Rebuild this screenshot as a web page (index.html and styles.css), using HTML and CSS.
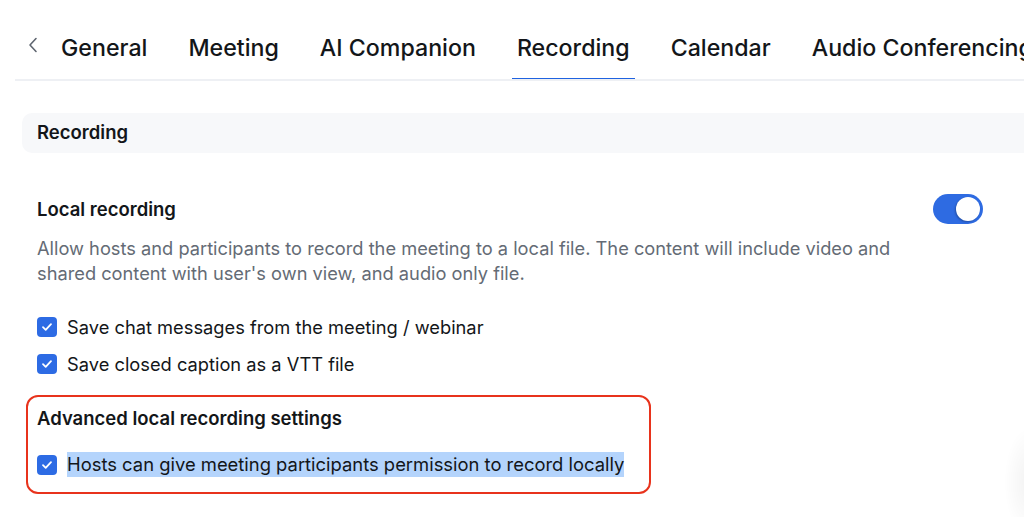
FILE: index.html
```html
<!DOCTYPE html>
<html>
<head>
    <title>Settings - Recording</title>
    <link rel="stylesheet" href="styles.css">
</head>
<body>
    <div class="tabs">
        <span class="tab-back">
            <svg width="12" height="16" viewBox="0 0 12 16"><path d="M9 1.5 L3 8 L9 14.5" fill="none" stroke="#5f6670" stroke-width="1.6" stroke-linecap="round" stroke-linejoin="round"/></svg>
        </span>
        <span class="tab">General</span>
        <span class="tab">Meeting</span>
        <span class="tab">AI Companion</span>
        <span class="tab active">Recording</span>
        <span class="tab">Calendar</span>
        <span class="tab">Audio Conferencing</span>
    </div>

    <div class="section-head">Recording</div>

    <div class="setting">
        <div class="setting-row">
            <div class="setting-title">Local recording</div>
            <div class="toggle on"><span class="knob"></span></div>
        </div>
        <p class="setting-desc">Allow hosts and participants to record the meeting to a local file. The content will include video and shared content with user's own view, and audio only file.</p>

        <label class="check-row"><span class="checkbox"><svg width="12" height="10" viewBox="0 0 12 10"><path d="M2 5.2 L4.7 7.8 L10 2.2" fill="none" stroke="#fff" stroke-width="1.8" stroke-linecap="round" stroke-linejoin="round"/></svg></span>Save chat messages from the meeting / webinar</label>
        <label class="check-row"><span class="checkbox"><svg width="12" height="10" viewBox="0 0 12 10"><path d="M2 5.2 L4.7 7.8 L10 2.2" fill="none" stroke="#fff" stroke-width="1.8" stroke-linecap="round" stroke-linejoin="round"/></svg></span>Save closed caption as a VTT file</label>

        <div class="advanced">
            <div class="advanced-title">Advanced local recording settings</div>
            <label class="check-row short"><span class="checkbox"><svg width="12" height="10" viewBox="0 0 12 10"><path d="M2 5.2 L4.7 7.8 L10 2.2" fill="none" stroke="#fff" stroke-width="1.8" stroke-linecap="round" stroke-linejoin="round"/></svg></span><span class="selected">Hosts can give meeting participants permission to record locally</span></label>
        </div>
    </div>
    <div class="edge-shadow"></div>
</body>
</html>
```

FILE: styles.css
```css
body {
    margin: 0;
    font-family: Inter, "Noto Sans", Arial, sans-serif;
    background: #fff;
    color: #131619;
    overflow: hidden;
}
.tabs {
    display: flex;
    align-items: center;
    gap: 31px;
    margin-left: 15px;
    height: 79px;
    border-bottom: 2px solid #eef0f4;
    white-space: nowrap;
    overflow: hidden;
}
.tab-back {
    display: flex;
    align-items: center;
    margin-left: 12px;
    margin-right: -14px;
    padding-top: 10px;
}
.tab {
    font-size: 23.2px;
    font-weight: 500;
    padding: 0 5px;
    height: 79px;
    line-height: 96px;
    box-sizing: border-box;
}
.tab.active {
    border-bottom: 3px solid #1f62e0;
    height: 81px;
    margin-bottom: -2px;
}
.section-head {
    margin: 32px 0 0 22px;
    background: #f7f8fa;
    border-radius: 10px 0 0 10px;
    height: 40px;
    line-height: 39px;
    padding-left: 15px;
    font-size: 18.5px;
    font-weight: 600;
}
.setting {
    padding: 0 41px 0 37px;
}
.setting-row {
    display: flex;
    justify-content: space-between;
    align-items: center;
    margin-top: 40px;
    height: 31px;
}
.setting-title {
    font-size: 18.5px;
    font-weight: 600;
}
.toggle {
    width: 50px;
    height: 30px;
    border-radius: 15px;
    background: #2e6be2;
    position: relative;
}
.toggle .knob {
    position: absolute;
    top: 3px;
    right: 3px;
    width: 24px;
    height: 24px;
    border-radius: 50%;
    background: #fff;
    box-shadow: -1px 1px 2px rgba(0,0,0,0.25);
}
.setting-desc {
    margin: 12px 0 22px;
    font-size: 18.25px;
    line-height: 25px;
    color: #646b75;
    max-width: 880px;
}
.check-row {
    display: flex;
    align-items: center;
    gap: 10px;
    font-size: 18.3px;
    height: 37px;
    color: #131619;
}
.check-row.short {
    height: 25px;
    font-size: 18.4px;
}
.checkbox {
    width: 20px;
    height: 20px;
    border-radius: 4px;
    background: #2d6be4;
    display: flex;
    align-items: center;
    justify-content: center;
    flex-shrink: 0;
}
.advanced {
    box-sizing: border-box;
    margin: 13px 0 0 -11px;
    width: 625px;
    border: 2px solid #e8331c;
    border-radius: 12px;
    padding: 9px 10px 15px 9px;
}
.advanced-title {
    font-size: 18.5px;
    font-weight: 600;
    line-height: 24px;
    margin-bottom: 22px;
}
.selected {
    background: #b4d4fc;
    line-height: 25px;
}
.edge-shadow {
    position: fixed;
    right: -30px;
    bottom: -20px;
    width: 50px;
    height: 110px;
    border-radius: 50%;
    background: radial-gradient(ellipse at center, rgba(0,0,0,0.05), rgba(0,0,0,0) 70%);
}
```
